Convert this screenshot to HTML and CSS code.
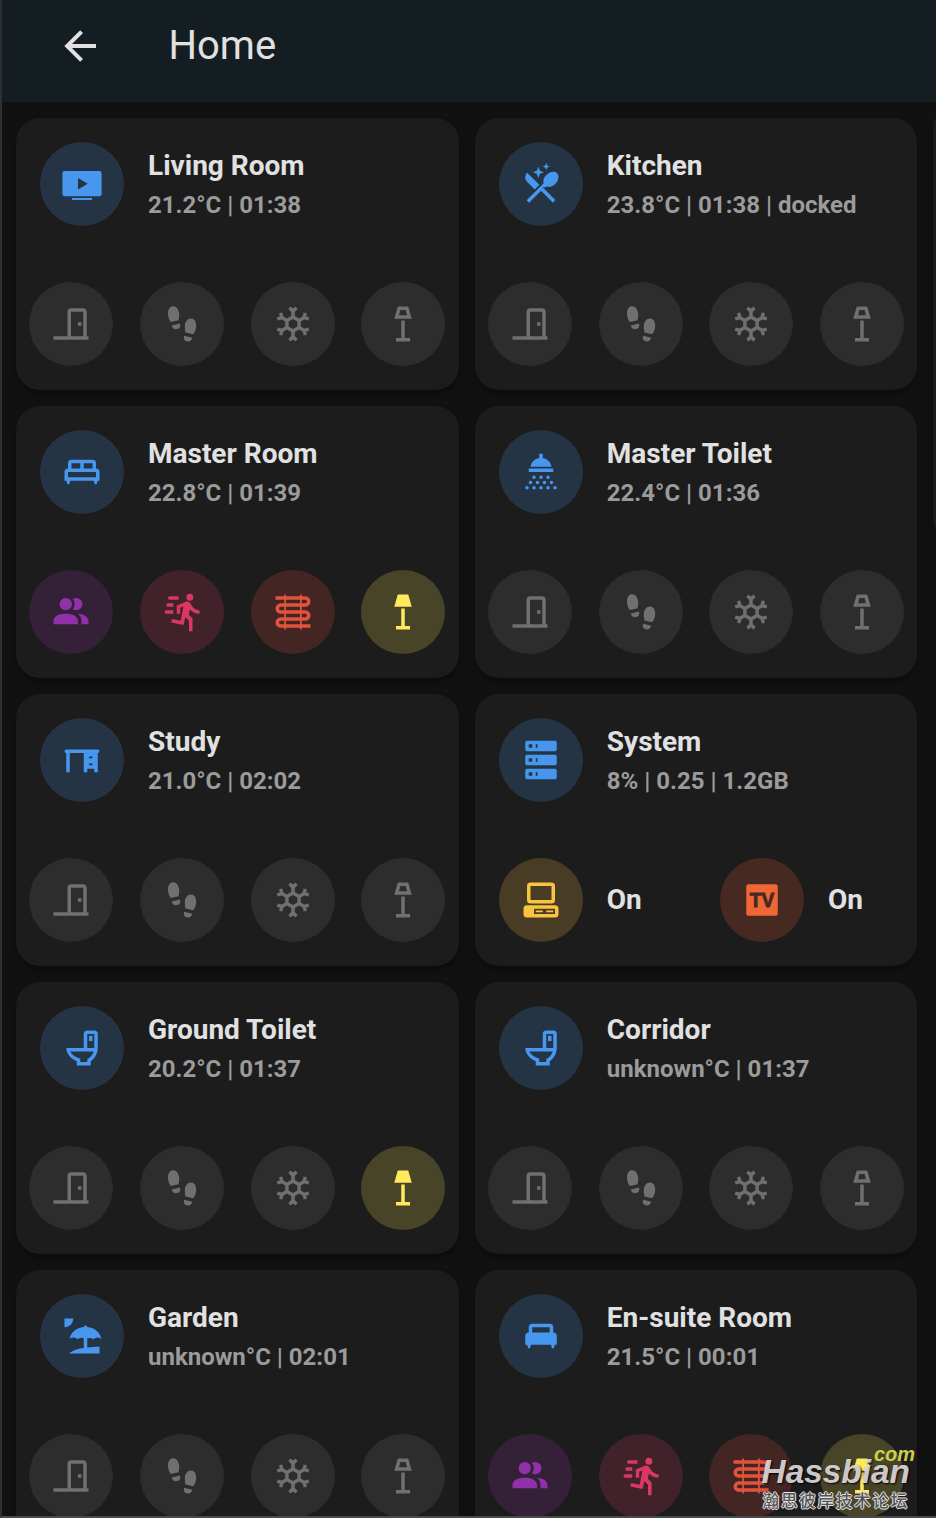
FILE: index.html
```
<!DOCTYPE html>
<html lang="en">

<head>
    <meta charset="utf-8">
    <meta name="viewport" content="width=device-width, initial-scale=1.0">
    <title>Home</title>
    <link rel="stylesheet" href="styles.css">
</head>

<body>
    <!-- icon set, 24 x 24 -->
    <svg class="icon_set" xmlns="http://www.w3.org/2000/svg">
        <symbol id="back" viewBox="0 0 24 24"><path d="M20,11V13H8L13.5,18.5L12.08,19.92L4.16,12L12.08,4.08L13.5,5.5L8,11H20Z"/></symbol>
        <symbol id="tv_play" viewBox="0 0 24 24"><path fill-rule="evenodd" d="M2,4.5H22Q23.2,4.5 23.2,5.7V17.8Q23.2,19 22,19H2Q0.8,19 0.8,17.8V5.7Q0.8,4.5 2,4.5ZM9.7,8.5V15.1L15.3,11.8ZM6.3,20H17.7V21.1H6.3Z"/></symbol>
        <symbol id="door" viewBox="0 0 24 24"><path d="M16,11H18V13H16V11M12,3H19C20.11,3 21,3.89 21,5V19H22V21H2V19H10V5C10,3.89 10.89,3 12,3M12,5V19H19V5H12Z"/></symbol>
        <symbol id="steps" viewBox="0 0 24 24"><path d="M10.74,11.72C11.21,12.95 11.16,14.23 9.75,14.74C6.85,15.81 6.2,13 6.16,12.86L10.74,11.72M5.71,10.91L10.03,9.84C10.1,9 10.5,8 10.4,6.2C10.2,3.7 8.9,1.7 6.7,1.8C4.7,1.9 4,4 4,6C4,7.9 4.7,10.1 5.71,10.91M17.85,19.85C17.82,20 17.16,22.8 14.26,21.74C12.86,21.22 12.8,19.94 13.27,18.71L17.85,19.85M18.3,17.9L13.97,16.84C13.9,16 13.5,15 13.6,13.2C13.8,10.7 15.1,8.8 17.3,8.9C19.3,9 20.1,11 20.1,13C20.1,14.9 19.3,17.1 18.3,17.9Z"/></symbol>
        <symbol id="snow" viewBox="0 0 24 24"><path d="M20.79,13.95L18.46,14.57L16.46,13.44V10.56L18.46,9.43L20.79,10.05L21.31,8.12L19.54,7.65L20,5.88L18.07,5.36L17.45,7.69L15.45,8.82L13,7.38V5.12L14.71,3.41L13.29,2L12,3.29L10.71,2L9.29,3.41L11,5.12V7.38L8.5,8.82L6.5,7.69L5.92,5.36L4,5.88L4.47,7.65L2.7,8.12L3.22,10.05L5.55,9.43L7.55,10.56V13.45L5.55,14.58L3.22,13.96L2.7,15.89L4.47,16.36L4,18.12L5.93,18.64L6.55,16.31L8.55,15.18L11,16.62V18.88L9.29,20.59L10.71,22L12,20.71L13.29,22L14.7,20.59L13,18.88V16.62L15.5,15.17L17.5,16.3L18.12,18.63L20,18.12L19.53,16.35L21.3,15.88L20.79,13.95M9.5,10.56L12,9.11L14.5,10.56V13.44L12,14.89L9.5,13.44V10.56Z"/></symbol>
        <symbol id="lamp_off" viewBox="0 0 24 24"><path fill-rule="evenodd" d="M9,2H15L17,9H7ZM10.5,4L9.7,7H14.3L13.5,4ZM11,10H13V20H16V22H8V20H11Z"/></symbol>
        <symbol id="lamp_on" viewBox="0 0 24 24"><path d="M9,2H15L17,9H7ZM11,10H13V20H16V22H8V20H11Z"/></symbol>
        <symbol id="people" viewBox="0 0 24 24"><path d="M16 17V19H2V17S2 13 9 13 16 17 16 17M12.5 7.5A3.5 3.5 0 1 0 9 11A3.5 3.5 0 0 0 12.5 7.5M15.94 13A5.32 5.32 0 0 1 18 17V19H22V17S22 13.37 15.94 13M15 4A3.39 3.39 0 0 0 13.07 4.59A5 5 0 0 1 13.07 10.41A3.39 3.39 0 0 0 15 11A3.5 3.5 0 0 0 15 4Z"/></symbol>
        <symbol id="run" viewBox="0 0 24 24"><path d="M16.5,5.5A2,2 0 0,0 18.5,3.5A2,2 0 0,0 16.5,1.5A2,2 0 0,0 14.5,3.5A2,2 0 0,0 16.5,5.5M12.9,19.4L13.9,15L16,17V23H18V15.5L15.9,13.5L16.5,10.5C17.89,12.09 19.89,13 22,13V11C20.24,11.03 18.6,10.11 17.7,8.6L16.7,7C16.34,6.4 15.7,6 15,6C14.7,6 14.5,6.1 14.2,6.1L9,8.3V13H11V9.6L12.8,8.9L11.2,17L6.3,16L5.9,18L12.9,19.4M4,9A1,1 0 0,1 3,8A1,1 0 0,1 4,7H7V9H4M5,5A1,1 0 0,1 4,4A1,1 0 0,1 5,3H10V5H5M3,13A1,1 0 0,1 2,12A1,1 0 0,1 3,11H7V13H3Z"/></symbol>
        <symbol id="coil" viewBox="0 0 24 24"><path fill="none" stroke="currentColor" stroke-width="2" d="M2,4H19a2,2 0 0 1 0,4H5a2,2 0 0 0 0,4H19a2,2 0 0 1 0,4H5a2,2 0 0 0 0,4H22"/><path d="M7,2H8V22H7ZM16,2H17V22H16Z"/></symbol>
        <symbol id="cutlery" viewBox="0 0 24 24"><path d="M4.1,5.6L11.1,12.4L8.4,15.1L4.3,11C2.6,9.3 2.6,7.2 4.1,5.6ZM12.7,13.6L20.2,21.2L18.8,22.7L12,15.9L5.2,22.7L3.8,21.3L13.5,11.5C13,9.8 13.7,8.1 15.2,6.7C17.2,4.7 20,4.5 21.2,5.8C22.5,7.1 22.2,9.9 20.3,11.8C18.8,13.3 17,14 15.3,13.4L13.9,14Z"/><path d="M10.5,2.1L11.4,4.4L13.7,5.3L11.4,6.2L10.5,8.5L9.6,6.2L7.3,5.3L9.6,4.4ZM15,0L15.6,1.4L17,2L15.6,2.6L15,4L14.4,2.6L13,2L14.4,1.4Z"/></symbol>
        <symbol id="bed" viewBox="0 0 24 24"><path fill-rule="evenodd" d="M6,5H18A2,2 0 0 1 20,7V10A2,2 0 0 1 22,12V17H21L20.3,19H19.3L18.7,17H5.3L4.7,19H3.7L3,17H2V12A2,2 0 0 1 4,10V7A2,2 0 0 1 6,5ZM6,7V10H11V7ZM13,7V10H18V7ZM4,12V15H20V12Z"/></symbol>
        <symbol id="shower" viewBox="0 0 24 24"><path d="M11,1.6H13V4C15.7,4.5 17.7,6.5 18,9H6C6.3,6.5 8.3,4.5 11,4ZM5,10H19V12H5Z"/><path fill="none" stroke="currentColor" stroke-width="2" stroke-linecap="round" d="M8,15h0M12,15h0M16,15h0M6,18h0M10,18h0M14,18h0M18,18h0M4,21h0M8,21h0M12,21h0M16,21h0M20,21h0"/></symbol>
        <symbol id="desk" viewBox="0 0 24 24"><path fill-rule="evenodd" d="M3,6H21A1,1 0 0 1 21,8V19H19V17H15V19H13V8H5V19H3V8A1,1 0 0 1 3,6ZM16,10V11H18V10ZM16,14V15H18V14Z"/></symbol>
        <symbol id="server" viewBox="0 0 24 24"><path fill-rule="evenodd" d="M4,1H20A1,1 0 0 1 21,2V6A1,1 0 0 1 20,7H4A1,1 0 0 1 3,6V2A1,1 0 0 1 4,1M4,9H20A1,1 0 0 1 21,10V14A1,1 0 0 1 20,15H4A1,1 0 0 1 3,14V10A1,1 0 0 1 4,9M4,17H20A1,1 0 0 1 21,18V22A1,1 0 0 1 20,23H4A1,1 0 0 1 3,22V18A1,1 0 0 1 4,17M5,3V5H7V3ZM9,3V5H10V3ZM5,11V13H7V11ZM9,11V13H10V11ZM5,19V21H7V19ZM9,19V21H10V19Z"/></symbol>
        <symbol id="computer" viewBox="0 0 24 24"><path fill-rule="evenodd" d="M6,2H18A2,2 0 0 1 20,4V12A2,2 0 0 1 18,14H6A2,2 0 0 1 4,12V4A2,2 0 0 1 6,2M6,4V12H18V4ZM4,15H20A2,2 0 0 1 22,17V20A2,2 0 0 1 20,22H4A2,2 0 0 1 2,20V17A2,2 0 0 1 4,15M8,17V20H20V17ZM9,18H13V19H9ZM15,18H19V19H15Z"/></symbol>
        <symbol id="tv_box" viewBox="0 0 24 24"><rect x="3" y="3" width="18" height="18" rx="1.5"/><text class="tv_text" x="5" y="16" textLength="14" lengthAdjust="spacingAndGlyphs">TV</text></symbol>
        <symbol id="toilet" viewBox="0 0 24 24"><path fill-rule="evenodd" d="M9,22H17V19.5C19.41,17.87 21,15.12 21,12V4A2,2 0 0 0 19,2H15A2,2 0 0 0 13,4V12H3C3,15.1 5.6,18.3 9,19.5ZM5.3,14H18.7C18,16 16.8,17.5 15,18.3V20H11V18C8.5,17.5 6.4,16 5.3,14ZM15,4H19V12H15ZM16,5V8H18V5Z"/></symbol>
        <symbol id="beach" viewBox="0 0 24 24"><path d="M2,2H7C7,4.8 4.8,7 2,7ZM13,6.8Q14,5.2 15,6.8C19.2,7.2 22.3,9.7 23,13.5Q20.3,12.1 18.6,13.8Q17,12.7 15,13.3V18.6Q18,18.2 22,18V22H5V21.5Q8.5,19.3 13,18.8V13.3Q11.2,12.6 9.6,13.8Q7.7,12.1 5,13.5C5.7,9.7 8.8,7.2 13,6.8Z"/></symbol>
        <symbol id="bed_solid" viewBox="0 0 24 24"><path fill-rule="evenodd" d="M7,5H17A2,2 0 0 1 19,7V10A2,2 0 0 1 21,12V17H20L19.3,19H18.3L17.7,17H6.3L5.7,19H4.7L4,17H3V12A2,2 0 0 1 5,10V7A2,2 0 0 1 7,5ZM7,7V10H17V7Z"/></symbol>
    </svg>

    <header class="top_bar">
        <svg class="back"><use href="#back"/></svg>
        <h1>Home</h1>
    </header>

    <main class="rooms">
        <article class="card">
            <div class="room">
                <div class="shape blue"><svg><use href="#tv_play"/></svg></div>
                <div class="info"><h2>Living Room</h2><p>21.2°C | 01:38</p></div>
            </div>
            <div class="chips">
                <div class="shape"><svg><use href="#door"/></svg></div>
                <div class="shape"><svg><use href="#steps"/></svg></div>
                <div class="shape"><svg><use href="#snow"/></svg></div>
                <div class="shape"><svg><use href="#lamp_off"/></svg></div>
            </div>
        </article>

        <article class="card">
            <div class="room">
                <div class="shape blue"><svg><use href="#cutlery"/></svg></div>
                <div class="info"><h2>Kitchen</h2><p>23.8°C | 01:38 | docked</p></div>
            </div>
            <div class="chips">
                <div class="shape"><svg><use href="#door"/></svg></div>
                <div class="shape"><svg><use href="#steps"/></svg></div>
                <div class="shape"><svg><use href="#snow"/></svg></div>
                <div class="shape"><svg><use href="#lamp_off"/></svg></div>
            </div>
        </article>

        <!-- edge of the next column -->
        <article class="card next"></article>

        <article class="card">
            <div class="room">
                <div class="shape blue"><svg><use href="#bed"/></svg></div>
                <div class="info"><h2>Master Room</h2><p>22.8°C | 01:39</p></div>
            </div>
            <div class="chips">
                <div class="shape purple"><svg><use href="#people"/></svg></div>
                <div class="shape pink"><svg><use href="#run"/></svg></div>
                <div class="shape red"><svg><use href="#coil"/></svg></div>
                <div class="shape yellow"><svg><use href="#lamp_on"/></svg></div>
            </div>
        </article>

        <article class="card">
            <div class="room">
                <div class="shape blue"><svg><use href="#shower"/></svg></div>
                <div class="info"><h2>Master Toilet</h2><p>22.4°C | 01:36</p></div>
            </div>
            <div class="chips">
                <div class="shape"><svg><use href="#door"/></svg></div>
                <div class="shape"><svg><use href="#steps"/></svg></div>
                <div class="shape"><svg><use href="#snow"/></svg></div>
                <div class="shape"><svg><use href="#lamp_off"/></svg></div>
            </div>
        </article>

        <article class="card">
            <div class="room">
                <div class="shape blue"><svg><use href="#desk"/></svg></div>
                <div class="info"><h2>Study</h2><p>21.0°C | 02:02</p></div>
            </div>
            <div class="chips">
                <div class="shape"><svg><use href="#door"/></svg></div>
                <div class="shape"><svg><use href="#steps"/></svg></div>
                <div class="shape"><svg><use href="#snow"/></svg></div>
                <div class="shape"><svg><use href="#lamp_off"/></svg></div>
            </div>
        </article>

        <article class="card">
            <div class="room">
                <div class="shape blue"><svg><use href="#server"/></svg></div>
                <div class="info"><h2>System</h2><p>8% | 0.25 | 1.2GB</p></div>
            </div>
            <div class="devices">
                <div class="room">
                    <div class="shape amber"><svg><use href="#computer"/></svg></div>
                    <h2>On</h2>
                </div>
                <div class="room">
                    <div class="shape orange"><svg><use href="#tv_box"/></svg></div>
                    <h2>On</h2>
                </div>
            </div>
        </article>

        <article class="card">
            <div class="room">
                <div class="shape blue"><svg><use href="#toilet"/></svg></div>
                <div class="info"><h2>Ground Toilet</h2><p>20.2°C | 01:37</p></div>
            </div>
            <div class="chips">
                <div class="shape"><svg><use href="#door"/></svg></div>
                <div class="shape"><svg><use href="#steps"/></svg></div>
                <div class="shape"><svg><use href="#snow"/></svg></div>
                <div class="shape yellow"><svg><use href="#lamp_on"/></svg></div>
            </div>
        </article>

        <article class="card">
            <div class="room">
                <div class="shape blue"><svg><use href="#toilet"/></svg></div>
                <div class="info"><h2>Corridor</h2><p>unknown°C | 01:37</p></div>
            </div>
            <div class="chips">
                <div class="shape"><svg><use href="#door"/></svg></div>
                <div class="shape"><svg><use href="#steps"/></svg></div>
                <div class="shape"><svg><use href="#snow"/></svg></div>
                <div class="shape"><svg><use href="#lamp_off"/></svg></div>
            </div>
        </article>

        <article class="card">
            <div class="room">
                <div class="shape blue"><svg><use href="#beach"/></svg></div>
                <div class="info"><h2>Garden</h2><p>unknown°C | 02:01</p></div>
            </div>
            <div class="chips">
                <div class="shape"><svg><use href="#door"/></svg></div>
                <div class="shape"><svg><use href="#steps"/></svg></div>
                <div class="shape"><svg><use href="#snow"/></svg></div>
                <div class="shape"><svg><use href="#lamp_off"/></svg></div>
            </div>
        </article>

        <article class="card">
            <div class="room">
                <div class="shape blue"><svg><use href="#bed_solid"/></svg></div>
                <div class="info"><h2>En-suite Room</h2><p>21.5°C | 00:01</p></div>
            </div>
            <div class="chips">
                <div class="shape purple"><svg><use href="#people"/></svg></div>
                <div class="shape pink"><svg><use href="#run"/></svg></div>
                <div class="shape red"><svg><use href="#coil"/></svg></div>
                <div class="shape yellow"><svg><use href="#lamp_on"/></svg></div>
            </div>
        </article>
    </main>

    <div class="watermark">
        <span class="com">com</span>
        <span class="name">Hassbian</span>
        <span class="forum">瀚思彼岸技术论坛</span>
    </div>
</body>

</html>
```
FILE: styles.css
```
* {
    box-sizing: border-box;
}

body {
    margin: 0;
    height: 1518px;
    overflow: hidden;
    position: relative;
    background-color: #111111;
    border-left: 2px solid #303030;
    border-bottom: 2px solid #4a4a4a;
    font-family: Roboto, sans-serif;
    color: #e1e1e1;
}

h1,
h2,
p {
    margin: 0;
}

svg {
    display: block;
    fill: currentColor;
}

.icon_set {
    display: none;
}

.top_bar {
    display: flex;
    align-items: center;
    height: 102px;
    padding: 0 54px 10px;
    background-color: #141e22;
}

.back {
    width: 48px;
    height: 48px;
}

.top_bar h1 {
    margin-left: 64.5px;
    font-size: 40px;
    font-weight: 400;
    line-height: 48px;
}

.rooms {
    display: grid;
    grid-template-columns: 442.8px 442.2px 1fr;
    grid-auto-rows: 272px;
    gap: 16px;
    padding: 16px 0 0 14px;
}

.card {
    display: flex;
    flex-direction: column;
    justify-content: space-between;
    padding: 24px 0;
    border-radius: 24px;
    background-color: #1c1c1c;
    box-shadow: 0 4px 6px rgba(0, 0, 0, .3);
}

.next {
    grid-column: 3;
    grid-row: 1 / span 5;
    height: 410px;
    border-radius: 3px 0 0 3px / 16px 0 0 16px;
}

.room {
    display: flex;
    align-items: center;
    gap: 24px;
    padding-left: 24px;
}

.info {
    padding-top: 2px;
}

.chips {
    display: grid;
    grid-template-columns: repeat(4, 1fr);
    justify-items: center;
}

.devices {
    display: grid;
    grid-template-columns: repeat(2, 1fr);
}

.shape {
    display: flex;
    align-items: center;
    justify-content: center;
    width: 84px;
    height: 84px;
    border-radius: 50%;
    background-color: #2d2d2d;
    color: #707070;
}

.shape svg {
    width: 42px;
    height: 42px;
}

.room h2 {
    font-size: 28px;
    font-weight: 700;
    line-height: 40px;
}

.room p {
    font-size: 24px;
    font-weight: 700;
    line-height: 38px;
    color: #9b9b9b;
}

.blue {
    background-color: #253444;
    color: #4797ee;
}

.purple {
    background-color: #342138;
    color: #9131a9;
}

.pink {
    background-color: #42222a;
    color: #d93863;
}

.red {
    background-color: #432523;
    color: #e3533c;
}

.yellow {
    background-color: #484428;
    color: #ffe95c;
}

.amber {
    background-color: #483c24;
    color: #f9c440;
}

.orange {
    background-color: #462a21;
    color: #f16637;
}

.tv_text {
    font-family: "Liberation Sans", sans-serif;
    font-size: 11.4px;
    font-weight: 700;
    fill: #462a21;
    stroke: #462a21;
    stroke-width: .5px;
}

/* lies over the last card */
.watermark {
    position: absolute;
    right: 21px;
    bottom: 5px;
    display: flex;
    flex-direction: column;
    align-items: flex-end;
    font-family: "Liberation Sans", "Noto Sans CJK SC", sans-serif;
    font-weight: 700;
    white-space: nowrap;
}

.com {
    font-size: 20px;
    line-height: 14px;
    font-style: italic;
    color: #c9cf4a;
}

.name {
    margin: -6px 5px 0 0;
    font-size: 33.4px;
    line-height: 34px;
    font-style: italic;
    color: rgba(232, 228, 228, .9);
    text-shadow: 1px 1px 2px #000000;
}

.forum {
    margin: 1px 6px 0 0;
    font-family: "Noto Sans CJK SC", sans-serif;
    font-size: 16.5px;
    font-weight: 500;
    line-height: 21px;
    letter-spacing: 1.8px;
    color: #555555;
    text-shadow: 1px 0 #e4e4e4, -1px 0 #e4e4e4, 0 1px #e4e4e4, 0 -1px #e4e4e4;
}
```
